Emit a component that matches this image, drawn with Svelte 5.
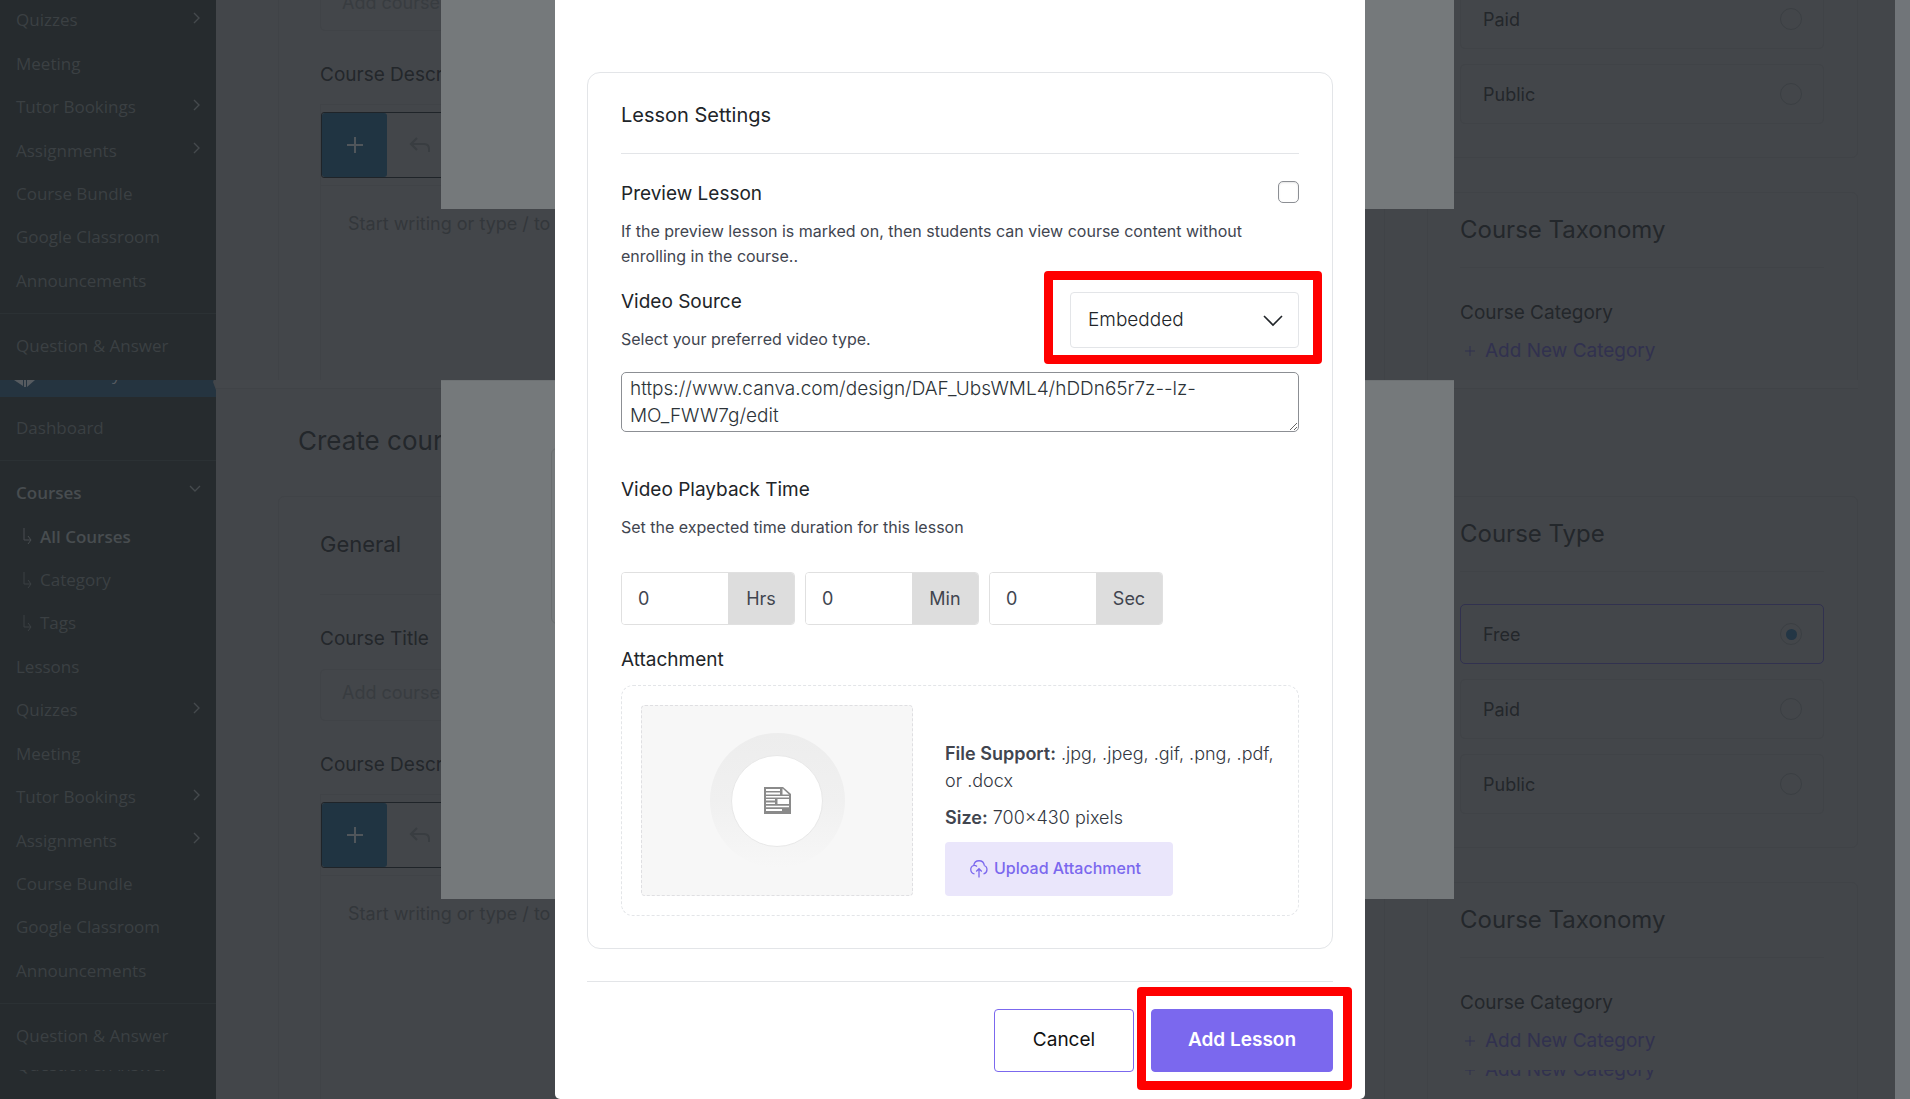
<script>
  const nav = [
    { label: 'Courses', icon: 'down', active: true },
    { label: 'All Courses', sub: true, active: true },
    { label: 'Category', sub: true },
    { label: 'Tags', sub: true },
    { label: 'Lessons' },
    { label: 'Quizzes', icon: 'right' },
    { label: 'Meeting' },
    { label: 'Tutor Bookings', icon: 'right' },
    { label: 'Assignments', icon: 'right' },
    { label: 'Course Bundle' },
    { label: 'Google Classroom' },
    { label: 'Announcements' }
  ];
  const courseTypes = ['Free', 'Paid', 'Public'];
  const durations = ['Hrs', 'Min', 'Sec'];
  let url = $state('https://www.canva.com/design/DAF_UbsWML4/hDDn65r7z--lz-MO_FWW7g/edit');
</script>

{#snippet screen(part)}
  <section class="frame {part}">
    <div class="screen">
      <nav class="sidebar">
        <a class="brand" href="#academy">
          <svg width="22" height="7" viewBox="0 0 22 7" aria-hidden="true">
            <path d="M0 0h9v6zM10 0h2v7h-2zM13 7V0h8z" fill="currentColor" />
          </svg>
          <span>Academy</span>
          <i class="notch"></i>
        </a>
        <a class="dashboard" href="#dashboard">Dashboard</a>
        <ul>
          {#each nav as item}
            <li class:sub={item.sub} class:active={item.active}>
              <a href="#nav">
                {#if item.sub}
                  <svg width="10" height="18" viewBox="0 0 10 18" aria-hidden="true">
                    <path d="M1 1v12h7M5 9l3 4-3 4" fill="none" stroke="currentColor" />
                  </svg>
                {/if}
                <span>{item.label}</span>
                {#if item.icon === 'right'}
                  <svg class="chev" width="8" height="12" viewBox="0 0 8 12" aria-hidden="true">
                    <path d="M1 1l5 5-5 5" fill="none" stroke="currentColor" stroke-width="1.4" />
                  </svg>
                {:else if item.icon === 'down'}
                  <svg class="chev down" width="12" height="8" viewBox="0 0 12 8" aria-hidden="true">
                    <path d="M1 1l5 5 5-5" fill="none" stroke="currentColor" stroke-width="1.4" />
                  </svg>
                {/if}
              </a>
            </li>
          {/each}
        </ul>
        <a class="question" href="#qa">Question &amp; Answer</a>
      </nav>

      <div class="content">
        <div class="topbar"></div>
        <h1>Create course</h1>
        <div class="columns">
          <div class="card general">
            <h2>General</h2>
            <label class="field">
              <span>Course Title</span>
              <input type="text" placeholder="Add course title" />
            </label>
            <h3>Course Description</h3>
            <div class="editor">
              <div class="tools">
                <button class="insert" aria-label="Add block">
                  <svg width="18" height="18" viewBox="0 0 18 18"><path d="M9 1v16M1 9h16" stroke="currentColor" stroke-width="2" /></svg>
                </button>
                <button class="undo" aria-label="Undo">
                  <svg width="22" height="18" viewBox="0 0 22 18"><path d="M8 2L2 8l6 6M2 8h13q5 0 5 5v3" fill="none" stroke="currentColor" stroke-width="2" /></svg>
                </button>
              </div>
              <p>Start writing or type / to choose a block</p>
            </div>
          </div>

          <div class="side">
            <div class="card type">
              <h2>Course Type</h2>
              <div class="options">
                {#each courseTypes as type, i}
                  <label class="option" class:chosen={i === 0}>
                    <span>{type}</span>
                    <input type="radio" name="type-{part}" checked={i === 0} />
                  </label>
                {/each}
              </div>
            </div>
            <div class="card taxonomy">
              <h2>Course Taxonomy</h2>
              <h3>Course Category</h3>
              <a href="#add-category">
                <svg width="12" height="12" viewBox="0 0 12 12" aria-hidden="true"><path d="M6 1v10M1 6h10" stroke="currentColor" /></svg>
                Add New Category
              </a>
            </div>
          </div>
        </div>
      </div>

      <div class="scrollbar"><i></i></div>
      <div class="sheet"><i></i></div>
    </div>
  </section>
{/snippet}

<main class="page">
  {@render screen('tail')}
  {@render screen('whole')}
  {@render screen('strip')}

  <div class="overlay">
    <form class="modal" onsubmit={(e) => e.preventDefault()}>
      <div class="settings">
        <h4 class="title">Lesson Settings</h4>

        <div class="row">
          <label class="name" for="preview">Preview Lesson</label>
          <input id="preview" type="checkbox" />
        </div>
        <p class="hint">If the preview lesson is marked on, then students can view course content without enrolling in the course..</p>

        <div class="row source">
          <div>
            <label class="name" for="source">Video Source</label>
            <p class="hint">Select your preferred video type.</p>
          </div>
          <div class="select marked">
            <select id="source"><option>Embedded</option></select>
            <svg width="20" height="12" viewBox="0 0 20 12" aria-hidden="true">
              <path d="M1 1l9 9 9-9" fill="none" stroke="#212529" stroke-width="1.6" />
            </svg>
          </div>
        </div>

        <textarea aria-label="Embedded video" bind:value={url}></textarea>

        <h5 class="name playback">Video Playback Time</h5>
        <p class="hint">Set the expected time duration for this lesson</p>
        <div class="times">
          {#each durations as unit}
            <label class="time">
              <input type="text" value="0" />
              <span>{unit}</span>
            </label>
          {/each}
        </div>

        <h5 class="name attachment">Attachment</h5>
        <div class="drop">
          <div class="thumb">
            <div class="halo">
              <div class="disc">
                <svg width="27" height="27" viewBox="0 0 27 27" aria-hidden="true">
                  <path d="M0 0h19l8 7v20H0z" fill="#8a8a8a" />
                  <path d="M2 2h14v2H2zM2 5.500h14v2H2zM2 9h23v1.500H2zM2 12h9v1.500H2zM2 15.500h9V17H2zM13.500 12H25v5H13.500zM2 18.700h23v1.600H2zM2 22h16v2H2zM18.500 1.500l6.500 6h-6.500z" fill="#fff" />
                </svg>
              </div>
            </div>
          </div>
          <div class="info">
            <p><b>File Support:</b> .jpg, .jpeg, .gif, .png, .pdf, or .docx</p>
            <p><b>Size:</b> 700×430 pixels</p>
            <button type="button" class="upload">
              <svg width="20" height="19" viewBox="0 0 20 19" aria-hidden="true">
                <path d="M5.500 14.800A4.300 4.300 0 0 1 4.600 6.500Q6.500 6.200 8 7.500M4.800 6.300a5.300 5.300 0 0 1 10.500 0M15 6.500a4.300 4.300 0 0 1-.5 8.300M10 18.500V10M7.200 12.500L10 9.700l2.800 2.800" fill="none" stroke="currentColor" stroke-width="1.300" />
              </svg>
              Upload Attachment
            </button>
          </div>
        </div>
      </div>

      <div class="actions">
        <button type="button" class="cancel">Cancel</button>
        <div class="marked save"><button class="add">Add Lesson</button></div>
      </div>
    </form>
  </div>
</main>

<style>
  :global(body) { background: #43464a; }
  * { box-sizing: border-box; margin: 0; }
  h1, h2, h3, h4, h5 { font-weight: 400; }
  a { text-decoration: none; color: inherit; }
  button, input, select, textarea { font: inherit; color: inherit; }
  svg { display: block; flex: none; }

  .page { position: relative; font-family: Inter, sans-serif; font-size: 18px; color: #212529; overflow: hidden; }

  .frame { display: flex; flex-direction: column; justify-content: flex-end; overflow: hidden; }
  .tail { height: 380px; }
  .strip { height: 29px; }
  .screen { position: relative; flex: none; display: grid; grid-template-columns: 216px 1fr 15px; height: 690px; overflow: hidden; background: #43464a; }

  .sidebar { background: #262b2e; color: #3b4043; font-family: "Open Sans", sans-serif; font-size: 17px; display: flex; flex-direction: column; }
  .brand { position: relative; height: 17px; display: flex; align-items: flex-end; gap: 12px; padding: 0 14px 12px; background: #253440; color: #565b60; overflow: hidden; line-height: 22px; }
  .brand svg { align-self: flex-start; }
  .notch { position: absolute; right: 0; top: -6px; border: 8px solid transparent; border-right: 3px solid #43464a; border-left: 0; }
  .dashboard { padding: 19px 16px 20px; line-height: 24px; height: 64px; border-bottom: 1px solid #2b3134; }
  .sidebar ul { list-style: none; padding: 10px 0 11px; height: 543px; display: grid; grid-template-rows: repeat(12, 1fr); border-bottom: 1px solid #2b3134; }
  .sidebar li a { height: 100%; display: flex; align-items: center; padding: 0 15px 0 16px; }
  .sidebar li.sub a { padding-left: 23px; gap: 7px; }
  .active { color: #484d50; font-weight: 600; }
  .chev { margin-left: auto; margin-bottom: 4px; color: #454a4d; }
  .down { margin-bottom: 8px; }
  .question { padding: 20px 16px; line-height: 24px; }

  .content { color: #23272b; padding-right: 37px; min-width: 0; }
  .topbar { height: 9px; background: #44474b; border-bottom: 1px solid #404347; }
  h1 { font-size: 26px; line-height: 32px; padding: 36px 0 39px 82px; }
  .columns { display: grid; grid-template-columns: 1fr 431px; gap: 42px; padding-left: 62px; }
  .card { border: 1px solid #404347; border-radius: 6px; }
  .general { height: 600px; padding: 0 41px; }
  .general h2 { font-size: 22px; line-height: 28px; padding: 33px 0; border-bottom: 1px solid #404347; height: 98px; }
  .field { display: block; }
  .field span { display: block; font-size: 19px; line-height: 28px; padding: 30px 0 16px; }
  .field input { width: 100%; height: 52px; padding: 0 21px 5px; background: none; border: 1px solid #404347; border-radius: 5px; }
  .field input::placeholder { color: #383c40; opacity: 1; }
  h3 { font-size: 19px; line-height: 28px; padding: 30px 0 16px; }
  .general h3 { padding-bottom: 15px; }
  .editor { border: 1px solid #404347; height: 320px; padding-top: 7px; }
  .tools { display: flex; border: 1px solid #1f2429; border-radius: 3px; height: 66px; }
  .tools button { border: 0; background: none; padding: 0; display: grid; place-items: center; width: 65px; }
  .tools .insert { background: #203442; color: #50565b; border-radius: 3px; }
  .tools .undo { color: #393d41; }
  .editor p { margin-top: 7px; border-top: 1px solid #404347; padding: 24px 27px; line-height: 28px; font-size: 18px; color: #33373b; }

  .side { display: flex; flex-direction: column; gap: 34px; }
  .type, .taxonomy { padding: 0 33px 0 32px; }
  .type h2, .taxonomy h2 { font-size: 24px; line-height: 32px; height: 75px; padding-top: 21px; border-bottom: 1px solid #404347; }
  .options { display: flex; flex-direction: column; gap: 15px; padding: 32px 0 33px; }
  .option { height: 60px; border: 1px solid #404347; border-radius: 5px; display: flex; align-items: center; justify-content: space-between; padding: 0 21px 0 22px; font-size: 18px; }
  .chosen { border-color: #31314f; }
  .option input { appearance: none; width: 22px; height: 22px; margin: 0; border: 1px solid #3b3f43; border-radius: 50%; display: grid; place-items: center; }
  .option input:checked::before { content: ""; width: 11px; height: 11px; border-radius: 50%; background: #233645; }
  .taxonomy { height: 260px; }
  .taxonomy h3 { padding: 31px 0 10px; }
  .taxonomy a { display: flex; align-items: center; gap: 9px; padding-left: 4px; line-height: 28px; font-size: 19px; color: #31314f; }

  .scrollbar { background: #717579; position: relative; overflow: hidden; }
  .scrollbar i { position: absolute; bottom: 8px; left: 7px; border: 6px solid transparent; border-top-color: #55595d; border-bottom: 0; }
  .sheet { position: absolute; inset: 0 15px auto 0; margin: 0 auto; width: 1013px; height: 519px; background: #75797b; border-top: 1px solid #6e7274; }
  .sheet i { display: block; margin: 67px 110px 0; height: 176px; border: 1px solid #6a6e70; border-radius: 6px; }

  .overlay { position: absolute; inset: 0; display: flex; justify-content: center; padding-left: 10px; }
  .modal { width: 810px; background: #fff; padding: 72px 32px 0; border-radius: 0 0 5px 5px; }
  .settings { border: 1px solid #e3e5e8; border-radius: 13px; padding: 0 33px 32px; }
  .title { font-size: 20px; line-height: 28px; padding: 28px 0 24px; margin-bottom: 26px; border-bottom: 1px solid #e3e5e8; }
  .name { display: block; font-size: 19px; line-height: 28px; }
  .row { display: flex; justify-content: space-between; align-items: flex-start; }
  .row input { appearance: none; width: 21px; height: 22px; margin-top: 1px; border: 1px solid #8c8f94; border-radius: 5px; background: #fff; box-shadow: inset 0 1px 2px #0000001a; }
  .hint { font-size: 16px; line-height: 25px; margin-top: 11px; color: #41454f; }
  .row + .hint { margin-bottom: 19px; }
  .source { margin: 0 0 20px; }
  .select { width: 229px; margin-top: 4px; }
  .select select { display: block; appearance: none; width: 100%; height: 56px; padding: 0 17px 2px; border: 1px solid #e3e5e8; border-radius: 4px; background: #fff; color: #212529; font-size: 19px; font-weight: 300; }
  .select svg { position: absolute; right: 16px; top: 23px; pointer-events: none; }
  .marked { position: relative; }
  .marked::after { content: ""; position: absolute; inset: -21px -23px -16px -26px; border: 9px solid #f00; border-radius: 4px; pointer-events: none; }
  .save::after { inset: -22px -19px -18px -14px; }
  textarea { display: block; width: 100%; height: 60px; padding: 2px 8px; font-size: 19px; font-weight: 300; line-height: 27px; border: 1px solid #8c8f94; border-radius: 5px; overflow: hidden; color: #2c3338; background: #fff; }
  .playback { margin-top: 44px; }
  .times { display: flex; gap: 10px; margin-top: 32px; }
  .time { display: flex; width: 174px; height: 53px; border: 1px solid #e0e0e0; border-radius: 4px; overflow: hidden; color: #41454f; }
  .time input { flex: 1; min-width: 0; border: 0; padding: 0 16px; background: #fff; }
  .time span { width: 66px; background: #ddd; display: grid; place-items: center; }
  .attachment { margin: 21px 0 11px; }
  .drop { border: 1px dashed #e3e5e8; border-radius: 12px; padding: 19px; display: flex; gap: 32px; }
  .thumb { width: 272px; height: 191px; flex: none; background: #f7f7f7; border: 1px dashed #dfdfe2; border-radius: 4px; display: grid; place-items: center; }
  .halo { width: 135px; height: 135px; border-radius: 50%; background: linear-gradient(#ededed, #f0f0f0 50%, #f7f7f7); display: grid; place-items: center; }
  .disc { width: 92px; height: 92px; border-radius: 50%; background: #fff; border: 1px solid #e8e8e8; display: grid; place-items: center; }
  .info { padding-top: 35px; color: #33373f; font-weight: 300; line-height: 27px; display: flex; flex-direction: column; align-items: flex-start; gap: 10px; }
  .info b { font-weight: 600; color: #41454f; }
  .upload { border: 0; height: 54px; margin-top: auto; padding: 0 32px 2px 24px; display: flex; align-items: center; gap: 5px; border-radius: 4px; background: #eae6fb; color: #7b68ee; font-size: 16px; font-weight: 500; }
  .actions { margin-top: 32px; border-top: 1px solid #e3e5e8; padding: 27px 0 25px; display: flex; justify-content: flex-end; gap: 17px; }
  .actions button { display: block; height: 63px; padding: 0 0 3px; border-radius: 4px; border: 1px solid #7b68ee; font-size: 19px; }
  .cancel { width: 140px; background: #fff; color: #111; }
  .add { width: 182px; background: #7b68ee; color: #fff; }
  .actions .add { font-weight: 600; }
</style>
